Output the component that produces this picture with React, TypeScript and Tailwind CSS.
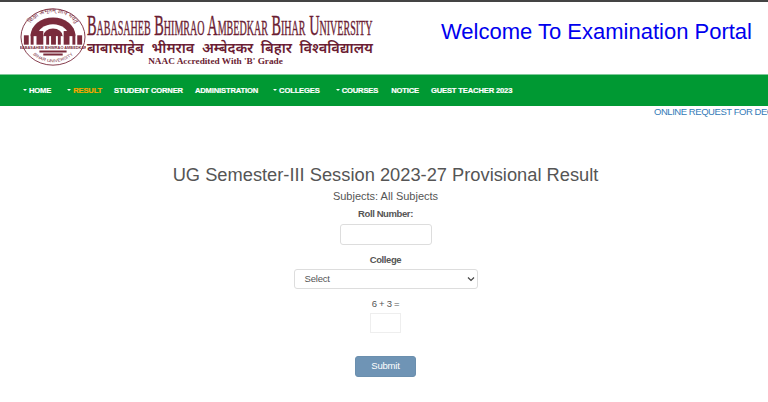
const navItems = [
  { label: "HOME", caret: true, className: "ml-[23px]" },
  { label: "RESULT", caret: true, active: true, className: "ml-[16px]" },
  { label: "STUDENT CORNER", className: "ml-[12px]" },
  { label: "ADMINISTRATION", className: "ml-[12px]" },
  { label: "COLLEGES", caret: true, className: "ml-[15px]" },
  { label: "COURSES", caret: true, className: "ml-[16px]" },
  { label: "NOTICE", className: "ml-[13px]" },
  { label: "GUEST TEACHER 2023", className: "ml-[12px]" },
];

function Seal() {
  return (
    <svg width="66" height="58" viewBox="0 0 68 68" preserveAspectRatio="none" className="shrink-0">
      <circle cx="34" cy="34" r="33" fill="#fff" stroke="#7a2b3c" strokeWidth="1" />
      <path id="sealTop" d="M7 32 A27 27 0 0 1 61 32" fill="none" />
      <text fontSize="6.5" fill="#7a2b3c" textAnchor="middle" fontFamily="'Noto Sans', sans-serif">
        <textPath href="#sealTop" startOffset="50%">शिक्षा अमृतम् ज्ञान भवतु</textPath>
      </text>
      <path d="M11 32 A23 21 0 0 1 57 32 L57 36 L11 36 Z" fill="#7a2b3c" />
      <path d="M18 33 A16 14 0 0 1 50 33 Z" fill="#fff" />
      <path d="M24 33 A10 9 0 0 1 44 33 Z" fill="#7a2b3c" />
      <rect x="3" y="33" width="62" height="10" fill="#fff" />
      <g fill="#7a2b3c">
        <rect x="4" y="32" width="5" height="11" />
        <rect x="11" y="30" width="3" height="13" />
        <rect x="17" y="27" width="7" height="16" />
        <rect x="27" y="31" width="3" height="12" />
        <rect x="32" y="28" width="5" height="15" />
        <rect x="39" y="31" width="3" height="12" />
        <rect x="45" y="27" width="6" height="16" />
        <rect x="54" y="30" width="3" height="13" />
        <rect x="59" y="32" width="5" height="11" />
      </g>
      <text x="34" y="48" textAnchor="middle" fontSize="4" fontWeight="bold" fill="#7a2b3c" fontFamily="'Liberation Sans', sans-serif">
        BABASAHEB BHIMRAO AMBEDKAR
      </text>
      <path d="M20 51 h28 M24 54.5 h20" stroke="#7a2b3c" strokeWidth="2.2" />
      <path id="sealBottom" d="M8 46 A28 28 0 0 0 60 46" fill="none" />
      <text fontSize="5" fill="#7a2b3c" textAnchor="middle" fontFamily="'Liberation Sans', sans-serif">
        <textPath href="#sealBottom" startOffset="50%">BIHAR UNIVERSITY</textPath>
      </text>
    </svg>
  );
}

function Caret() {
  return <span className="mr-[2px] inline-block h-0 w-0 translate-y-[-2px] border-x-[2px] border-t-[2px] border-x-transparent border-t-white" />;
}

export default function App() {
  return (
    <div className="h-[402px] w-[768px] overflow-hidden bg-white font-['Liberation_Sans',Arial,sans-serif] text-[#555]">
      <div className="h-[2px] bg-[#444]" />
      <header className="flex h-[72px] items-start">
        <div className="ml-[20px] mt-[6px] flex">
          <Seal />
          <div className="ml-[1px] mt-[3px] flex w-[286px] flex-col items-center">
            <div className="h-[27px] w-full origin-left scale-x-[0.478] whitespace-nowrap font-['Liberation_Serif',serif] text-[30px] leading-[27px] text-[#6b1d33] [-webkit-text-stroke:0.4px_#6b1d33] [font-variant:small-caps]">
              Babasaheb Bhimrao Ambedkar Bihar University
            </div>
            <div className="h-[18px] whitespace-nowrap font-['Noto_Sans','Liberation_Serif',serif] text-[14.5px] font-semibold leading-[18px] text-[#6b1d33] [word-spacing:3.8px]">
              बाबासाहेब भीमराव अम्बेदकर बिहार विश्वविद्यालय
            </div>
            <div className="mr-[29px] whitespace-nowrap font-['Liberation_Serif',serif] text-[9.25px] font-bold leading-[11px] text-[#6b1d33]">
              NAAC Accredited With 'B' Grade
            </div>
          </div>
        </div>
        <h1 className="ml-auto mr-[16px] mt-[15px] whitespace-nowrap text-[22px] leading-[29px] text-[#0000ee]">
          Welcome To Examination Portal
        </h1>
      </header>

      <nav className="flex h-[32px] items-center border-t border-[#7fc99a] bg-[#009933]">
        {navItems.map((item) => (
          <a
            key={item.label}
            className={`${item.className} whitespace-nowrap text-[7.6px] font-bold tracking-[-0.15px] [-webkit-text-stroke:0.2px] ${item.active ? "text-[#f7a600]" : "text-white"}`}
          >
            {item.caret && <Caret />}
            {item.label}
          </a>
        ))}
      </nav>

      <div className="mt-[-1px] overflow-hidden pl-[654px]">
        <div className="w-max whitespace-nowrap text-[9.5px] leading-[13px] tracking-[-0.45px] text-[#337ab7]">
          ONLINE REQUEST FOR DEGREE
        </div>
      </div>

      <main className="mt-[44px] flex flex-col items-center pl-[3px]">
        <h2 className="h-[26px] text-[18.3px] leading-[26px]">UG Semester-III Session 2023-27 Provisional Result</h2>
        <h3 className="h-[16px] text-[11px] leading-[16px]">Subjects: All Subjects</h3>
        <label className="mt-[4px] h-[12px] text-[9.5px] font-bold leading-[12px] tracking-[-0.4px]">Roll Number:</label>
        <input className="mt-[4px] h-[21px] w-[92px] rounded-[3px] border border-[#ddd] bg-white" />
        <label className="mt-[9px] h-[12px] text-[9.5px] font-bold leading-[12px] tracking-[-0.4px]">College</label>
        <div className="mt-[3px] flex h-[20px] w-[184px] items-center justify-between rounded-[3px] border border-[#ddd] bg-white pl-[10px] pr-[2px] text-[9.5px] tracking-[-0.2px]">
          <span className="pt-[1px]">Select</span>
          <svg width="8" height="8" viewBox="0 0 8 8" fill="none" stroke="#444" strokeWidth="1.2">
            <path d="M1 2.5 L4 5.5 L7 2.5" />
          </svg>
        </div>
        <div className="mt-[9px] h-[12px] text-[9.5px] leading-[12px] tracking-[-0.3px]">6 + 3 =</div>
        <input className="mt-[3px] h-[20px] w-[31px] border border-[#eee] bg-white" />
        <button className="mt-[23px] h-[21px] w-[61px] rounded-[3px] border border-[#6b8fae] bg-[#6f94b5] text-[9.5px] tracking-[-0.2px] text-white">
          Submit
        </button>
      </main>
    </div>
  );
}
